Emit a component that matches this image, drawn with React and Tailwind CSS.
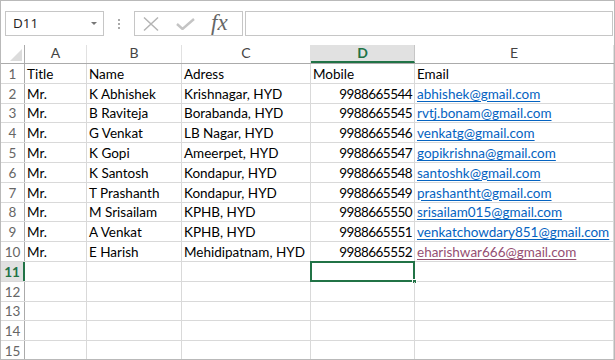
import React from "react";

const columns = [
  { key: "A", w: "w-[62px]" },
  { key: "B", w: "w-[95px]" },
  { key: "C", w: "w-[129px]" },
  { key: "D", w: "w-[104px]" },
  { key: "E", w: "flex-1" },
];

const data = [
  ["Title", "Name", "Adress", "Mobile", "Email"],
  ["Mr.", "K Abhishek", "Krishnagar, HYD", "9988665544", "abhishek@gmail.com"],
  ["Mr.", "B Raviteja", "Borabanda, HYD", "9988665545", "rvtj.bonam@gmail.com"],
  ["Mr.", "G Venkat", "LB Nagar, HYD", "9988665546", "venkatg@gmail.com"],
  ["Mr.", "K Gopi", "Ameerpet, HYD", "9988665547", "gopikrishna@gmail.com"],
  ["Mr.", "K Santosh", "Kondapur, HYD", "9988665548", "santoshk@gmail.com"],
  ["Mr.", "T Prashanth", "Kondapur, HYD", "9988665549", "prashantht@gmail.com"],
  ["Mr.", "M Srisailam", "KPHB, HYD", "9988665550", "srisailam015@gmail.com"],
  ["Mr.", "A Venkat", "KPHB, HYD", "9988665551", "venkatchowdary851@gmail.com"],
  ["Mr.", "E Harish", "Mehidipatnam, HYD", "9988665552", "eharishwar666@gmail.com"],
  ["", "", "", "", ""],
  ["", "", "", "", ""],
  ["", "", "", "", ""],
  ["", "", "", "", ""],
  ["", "", "", "", ""],
];

function FormulaBar() {
  return (
    <div className="flex items-center h-[25px] mt-[10px] pl-[4px] pr-[1px]">
      <div className="flex items-center justify-between w-[99px] h-[25px] border border-[#c6c6c6] pl-[7px] pr-[6px] text-[13.5px] text-[#222] font-['Open_Sans',sans-serif]">
        <span>D11</span>
        <span className="w-0 h-0 border-l-[3px] border-r-[3px] border-t-[3px] border-l-transparent border-r-transparent border-t-[#777]"></span>
      </div>
      <div className="flex flex-col gap-[2px] w-[30px] items-center">
        <span className="w-[2px] h-[2px] bg-[#aaa]"></span>
        <span className="w-[2px] h-[2px] bg-[#aaa]"></span>
        <span className="w-[2px] h-[2px] bg-[#aaa]"></span>
      </div>
      <div className="flex items-center w-[109px] h-[25px] border border-[#c6c6c6] pl-[7px] gap-[16px]">
        <svg width="18" height="16" viewBox="0 0 18 16">
          <path d="M2 1.5 L16 14.5 M16 1.5 L2 14.5" stroke="#b4b4b4" strokeWidth="1.5" fill="none" />
        </svg>
        <svg width="19" height="12" viewBox="0 0 19 12">
          <path d="M1 6 L6.5 11 L18 1" stroke="#c4c4c4" strokeWidth="2.4" fill="none" />
        </svg>
        <span className="font-['Liberation_Serif',serif] italic text-[23px] leading-none text-[#666] -mt-[3px]">
          fx
        </span>
      </div>
      <div className="flex-1 h-[25px] ml-[2px] border border-[#c6c6c6]"></div>
    </div>
  );
}

export default function App() {
  return (
    <div className="w-[615px] h-[360px] bg-white border border-[#b9b9b9] overflow-hidden font-['Lato',sans-serif] text-[13.5px] text-black">
      <FormulaBar />
      <div className="mt-[9px]">
        {/* column headers */}
        <div className="flex h-[19px] border-b border-[#ababab]">
          <div className="relative w-[24px] border-r border-[#ababab]">
            <svg className="absolute right-[2px] bottom-[2px]" width="12" height="12" viewBox="0 0 12 12">
              <path d="M12 0 L12 12 L0 12 Z" fill="#dcdcdc" />
            </svg>
          </div>
          {columns.map((c) =>
            c.key === "D" ? (
              <div
                key={c.key}
                className={`${c.w} flex items-end justify-center leading-[16px] bg-[#e1e1e1] border-r border-[#c6c6c6] border-b-2 border-b-[#217346] text-[#217346] font-bold text-[14px]`}
              >
                {c.key}
              </div>
            ) : (
              <div
                key={c.key}
                className={`${c.w} flex items-end justify-center leading-[16px] pb-[2px] border-r border-[#e1e1e1] text-[#444] text-[14px]`}
              >
                {c.key}
              </div>
            )
          )}
        </div>

        {/* rows */}
        {data.map((row, i) => {
          const n = i + 1;
          const current = n === 11;
          return (
            <div key={n} className="flex h-[19.8px] border-b border-[#d9d9d9]">
              {current ? (
                <div className="w-[24px] flex items-end justify-center leading-[18px] bg-[#e1e1e1] border-r-2 border-[#217346] text-[#217346] font-bold text-[13.5px]">
                  {n}
                </div>
              ) : (
                <div className="w-[24px] flex items-end justify-center leading-[18px] border-r border-[#ababab] text-[#666] text-[13.5px]">
                  {n}
                </div>
              )}
              {columns.map((c, j) => {
                const v = row[j];
                const isNum = j === 3 && i > 0;
                const isLink = j === 4 && i > 0;
                const selected = current && c.key === "D";
                return (
                  <div
                    key={c.key}
                    className={`${c.w} relative flex items-end leading-[18px] border-r border-[#d9d9d9] px-[2px] whitespace-nowrap ${
                      isNum ? "justify-end tracking-[-0.55px]" : ""
                    }`}
                  >
                    {isLink ? (
                      <span className={`underline underline-offset-[2px] ${n === 10 ? "text-[#954f72]" : "text-[#0563c1]"}`}>{v}</span>
                    ) : (
                      <span>{v}</span>
                    )}
                    {selected && (
                      <>
                        <div className="absolute -left-[1px] -top-[1px] -right-[1px] -bottom-[1px] border-2 border-[#217346]"></div>
                        <div className="absolute -right-[3px] -bottom-[3px] w-[5px] h-[5px] bg-[#217346] border border-white"></div>
                      </>
                    )}
                  </div>
                );
              })}
            </div>
          );
        })}
      </div>
    </div>
  );
}
